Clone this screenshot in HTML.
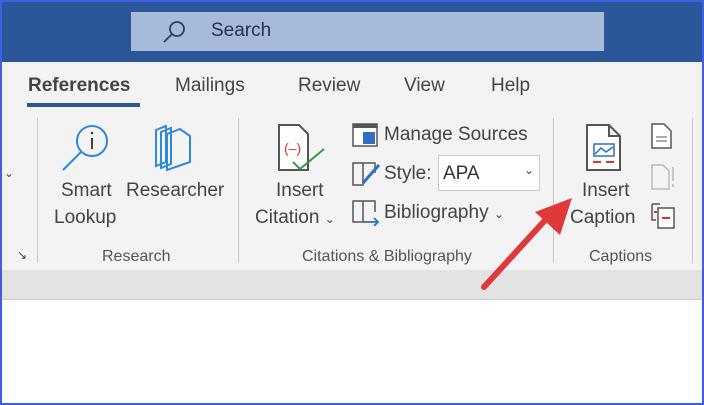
<!DOCTYPE html><html><head><style>
*{margin:0;padding:0;box-sizing:border-box}
body{width:704px;height:405px;position:relative;overflow:hidden;background:#fff;font-family:"Liberation Sans",sans-serif;color:#444}
.a{position:absolute;white-space:nowrap}
.t{font-size:19px;color:#444}
.l{font-size:16px;color:#555}
</style></head><body>
<div class="a" style="left:0;top:0;width:704px;height:62px;background:#2b579a"></div>
<div class="a" style="left:131px;top:12px;width:473px;height:39px;background:#a7bad8"></div>
<svg class="a" style="left:160px;top:18px" width="30" height="28"><circle cx="17" cy="11" r="7" fill="none" stroke="#2b3f63" stroke-width="1.8"/><line x1="12" y1="16" x2="4" y2="24" stroke="#2b3f63" stroke-width="1.8"/></svg>
<div class="a" style="left:211px;top:20px;font-size:19px;color:#24324f">Search</div>
<div class="a" style="left:0;top:62px;width:704px;height:208px;background:#f3f3f3"></div>
<div class="a" style="left:0;top:270px;width:704px;height:30px;background:#e3e3e3;border-bottom:1px solid #ccc"></div>
<div class="a t" style="left:28px;top:75px;font-weight:bold;color:#444">References</div>
<div class="a" style="left:27px;top:103px;width:113px;height:4px;background:#2b579a"></div>
<div class="a t" style="left:175px;top:75px">Mailings</div>
<div class="a t" style="left:298px;top:75px">Review</div>
<div class="a t" style="left:404px;top:75px">View</div>
<div class="a t" style="left:491px;top:75px">Help</div>
<div class="a" style="left:37px;top:118px;width:1px;height:145px;background:#c8c8c8"></div>
<div class="a" style="left:238px;top:118px;width:1px;height:145px;background:#c8c8c8"></div>
<div class="a" style="left:553px;top:118px;width:1px;height:145px;background:#c8c8c8"></div>
<div class="a" style="left:692px;top:118px;width:1px;height:145px;background:#c8c8c8"></div>
<div class="a" style="left:4px;top:166px;font-size:12px">&#8964;</div>
<svg class="a" style="left:60px;top:122px" width="55" height="52"><circle cx="32" cy="19" r="15" fill="none" stroke="#2e8ad8" stroke-width="2"/><line x1="21" y1="30" x2="3" y2="48" stroke="#2e8ad8" stroke-width="2"/><line x1="32" y1="16" x2="32" y2="27" stroke="#444" stroke-width="2"/><circle cx="32" cy="11" r="1.3" fill="#444"/></svg>
<svg class="a" style="left:152px;top:122px" width="45" height="50"><path d="M4 8 L14 4 V40 L4 44Z M9 10 L19 6 V42 L9 46Z M15 12 L28 7 L38 14 V40 L15 48Z" fill="#f3f3f3" stroke="#2e8ad8" stroke-width="2"/></svg>
<div class="a t" style="left:61px;top:180px">Smart</div>
<div class="a t" style="left:54px;top:207px">Lookup</div>
<div class="a t" style="left:126px;top:180px">Researcher</div>
<div class="a l" style="left:102px;top:248px">Research</div>
<div class="a" style="left:17px;top:248px;font-size:12px">&#8600;</div>
<svg class="a" style="left:276px;top:122px" width="50" height="52"><path d="M3 3 H23 L32 12 V48 H3Z" fill="#fff" stroke="#555" stroke-width="2"/><text x="8" y="31" font-size="14" fill="#d33" font-family="Liberation Sans">(–)</text><path d="M17 40 L24 47 L48 27" fill="none" stroke="#2e9a45" stroke-width="2"/></svg>
<div class="a t" style="left:276px;top:180px">Insert</div>
<div class="a t" style="left:255px;top:207px">Citation <span style="font-size:12px">&#8964;</span></div>
<svg class="a" style="left:351px;top:122px" width="28" height="26"><rect x="2" y="2" width="24" height="22" fill="#fff" stroke="#555" stroke-width="1.5"/><rect x="2" y="2" width="24" height="4" fill="#555"/><rect x="12" y="10" width="12" height="12" fill="#2e6fbf"/></svg>
<div class="a t" style="left:384px;top:124px">Manage Sources</div>
<svg class="a" style="left:351px;top:159px" width="30" height="28"><path d="M2 4 H12 V26 H2Z M12 4 H24 V14" fill="none" stroke="#555" stroke-width="1.5"/><path d="M28 6 L12 24" stroke="#2e6fbf" stroke-width="3"/></svg>
<div class="a t" style="left:384px;top:163px">Style:</div>
<div class="a" style="left:438px;top:155px;width:102px;height:36px;background:#fff;border:1px solid #c8c8c8"></div>
<div class="a t" style="left:443px;top:163px;color:#333">APA</div>
<div class="a" style="left:524px;top:163px;font-size:12px">&#8964;</div>
<svg class="a" style="left:351px;top:198px" width="30" height="28"><path d="M2 3 H12 V24 H2Z M12 3 H24 V14 M12 24 H15" fill="none" stroke="#555" stroke-width="1.5"/><path d="M14 24 H27 M23 20 L27 24 L23 28" fill="none" stroke="#2e6fbf" stroke-width="1.8"/></svg>
<div class="a t" style="left:384px;top:202px">Bibliography <span style="font-size:12px">&#8964;</span></div>
<div class="a l" style="left:302px;top:248px">Citations &amp; Bibliography</div>
<svg class="a" style="left:584px;top:122px" width="40" height="52"><path d="M3 3 H25 L36 14 V48 H3Z M25 3 V14 H36" fill="#fff" stroke="#555" stroke-width="2"/><rect x="10" y="22" width="20" height="12" fill="#fff" stroke="#2e6fbf" stroke-width="1.5"/><path d="M11 32 L17 26 L22 30 L29 25" fill="none" stroke="#2e6fbf" stroke-width="1.5"/><path d="M9 40 H17 M22 40 H30" stroke="#d33" stroke-width="2"/></svg>
<div class="a t" style="left:582px;top:180px">Insert</div>
<div class="a t" style="left:570px;top:207px">Caption</div>
<svg class="a" style="left:650px;top:122px" width="24" height="28"><path d="M2 2 H14 L21 9 V26 H2Z" fill="#fff" stroke="#555" stroke-width="1.5"/><path d="M6 15 H17 M6 19 H17" stroke="#555"/></svg>
<svg class="a" style="left:650px;top:163px" width="26" height="28"><path d="M2 2 H13 L19 8 V26 H2Z" fill="none" stroke="#bbb" stroke-width="1.5"/><path d="M23 4 V18 M23 21 V24" stroke="#bbb" stroke-width="1.5"/></svg>
<svg class="a" style="left:650px;top:200px" width="28" height="30"><path d="M2 4 H10 M2 4 V20 H6" fill="none" stroke="#555" stroke-width="1.5"/><rect x="8" y="8" width="16" height="20" fill="#fff" stroke="#555" stroke-width="1.5"/><path d="M12 18 H20" stroke="#d33" stroke-width="2"/><path d="M4 12 H7" stroke="#d33" stroke-width="2"/></svg>
<div class="a l" style="left:589px;top:248px">Captions</div>
<svg class="a" style="left:470px;top:190px" width="110" height="110"><line x1="14" y1="97" x2="78" y2="27" stroke="#e0393b" stroke-width="6" stroke-linecap="round"/><path d="M102 8 L65 22 L90 45Z" fill="#e0393b"/></svg>
<div class="a" style="left:0;top:0;width:704px;height:405px;border:2px solid #3d5ee6"></div>
</body></html>
